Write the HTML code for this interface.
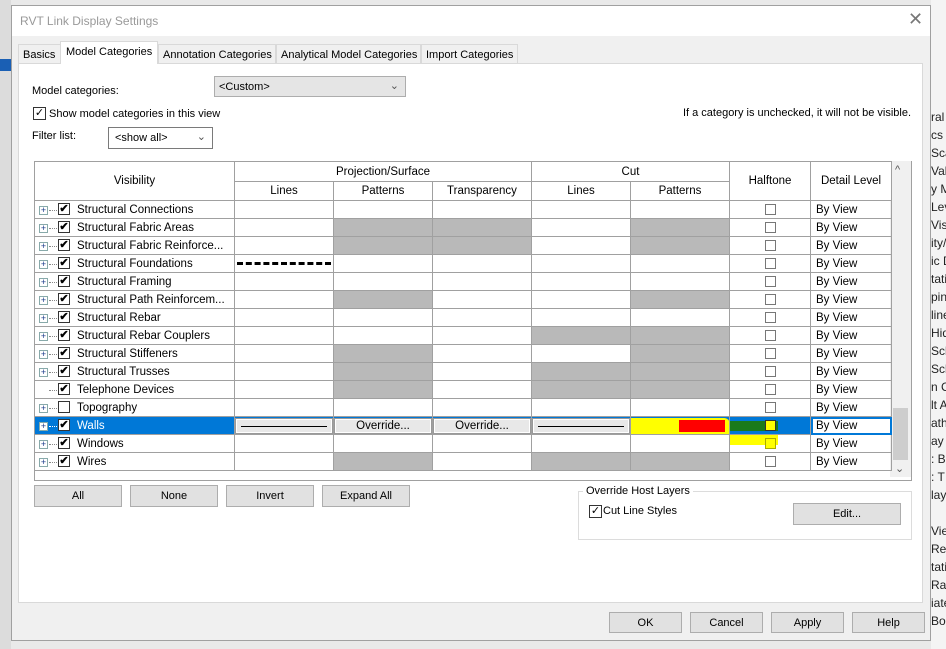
<!DOCTYPE html>
<html><head><meta charset="utf-8">
<style>
*{box-sizing:border-box;margin:0;padding:0}
body{width:946px;height:649px;overflow:hidden;background:#e9e9e9;font-family:"Liberation Sans",sans-serif;font-size:11px;color:#000;position:relative}
.a{position:absolute}
.dlg{left:11px;top:5px;width:920px;height:636px;background:#f0f0f0;border:1px solid #a0a0a0}
.title{left:0;top:0;width:918px;height:30px;background:#fff}
.tab{top:38px;height:20px;border:1px solid #d9d9d9;border-bottom:none;background:#f0f0f0;padding:4px 0 0 4px;white-space:nowrap;overflow:hidden}
.panel{left:6px;top:57px;width:905px;height:540px;background:#fff;border:1px solid #d9d9d9}
.btn{background:#e1e1e1;border:1px solid #adadad;text-align:center;line-height:20px}
.cb{width:13px;height:13px;border:1px solid #333;background:#fff}
table{border-collapse:collapse;table-layout:fixed}
td{border:1px solid #a0a0a0;height:18px;padding:0;white-space:nowrap;overflow:hidden;font-size:11.5px}
.h td{text-align:center;background:#fff}
.x{background:repeating-conic-gradient(#8c8c8c 0 25%,#e6e6e6 0 50%) 0 0/2px 2px}
.v{position:relative;padding-left:42px}
.pl{position:absolute;left:4px;top:5px;width:9px;height:9px;border:1px solid #8aa;background:#fff;font-size:9px;line-height:7px;text-align:center;color:#1a3a8a}
.dot{position:absolute;left:14px;top:9px;width:8px;border-top:1px dotted #888}
.c{position:absolute;left:23px;top:2px;width:12px;height:12px;border:1px solid #333;background:#fff;font-size:11px;line-height:10px;text-align:center;font-weight:bold}
.hc{text-align:center}
.hb{display:inline-block;width:11px;height:11px;border:1px solid #777;background:#fff;vertical-align:middle}
.dl{padding-left:5px}
.sel td{background:#0078d7;color:#fff}
.ob{background:#e8e8e8;border:1px solid #fff;outline:1px solid #999;height:14px;margin:1px;color:#000;text-align:center;line-height:13px}
</style></head><body>
<div class="a" style="left:0;top:0;width:11px;height:649px;background:#dcdcdc"></div>
<div class="a" style="left:0;top:59px;width:11px;height:12px;background:#1a5fb4"></div>
<div class="a" style="left:931px;top:0;width:15px;height:649px;background:#f4f4f4;overflow:hidden;font-size:12px;line-height:18px;color:#222;white-space:nowrap">
<div style="margin-top:108px">ral<br>cs<br>Sca<br>Val<br>y M<br>Lev<br>Visi<br>ity/<br>ic D<br>tati<br>pin<br>line<br>Hid<br>Sch<br>Sch<br>n C<br>lt A<br>ath<br>ay<br>: B<br>: T<br>lay<br><br>Vie<br>Reg<br>tati<br>Ran<br>iate<br>Bo</div></div>
<div class="a dlg">
 <div class="a title"><span class="a" style="left:8px;top:8px;color:#999;font-size:12px">RVT Link Display Settings</span>
 <span class="a" style="left:896px;top:3px;color:#777;font-size:18px">✕</span></div>
 <div class="a tab" style="left:6px;width:44px">Basics</div>
 <div class="a tab" style="left:146px;width:118px;">Annotation Categories</div>
 <div class="a tab" style="left:264px;width:145px">Analytical Model Categories</div>
 <div class="a tab" style="left:409px;width:97px">Import Categories</div>
 <div class="a panel">
  <span class="a" style="left:13px;top:21px">Model categories:</span>
  <div class="a" style="left:195px;top:12px;width:192px;height:21px;background:#e5e5e5;border:1px solid #adadad;padding:4px 0 0 4px">&lt;Custom&gt;<span class="a" style="right:6px;top:2px;color:#555">⌄</span></div>
  <div class="a cb" style="left:14px;top:43px;border-color:#333;font-size:11px;line-height:11px;text-align:center">✓</div>
  <span class="a" style="left:30px;top:44px">Show model categories in this view</span>
  <span class="a" style="left:13px;top:66px">Filter list:</span>
  <div class="a" style="left:89px;top:63px;width:105px;height:22px;background:#fff;border:1px solid #7a7a7a;padding:4px 0 0 6px">&lt;show all&gt;<span class="a" style="right:6px;top:2px;color:#555">⌄</span></div>
  <span class="a" style="right:11px;top:43px">If a category is unchecked, it will not be visible.</span>
  <div class="a" style="left:15px;top:97px;width:878px;height:320px;border:1px solid #a0a0a0;background:#fff"></div>
  <div class="a" style="left:871px;top:97px;width:21px;height:316px;background:#f0f0f0"></div>
  <span class="a" style="left:876px;top:100px;color:#555">^</span>
  <div class="a" style="left:874px;top:344px;width:15px;height:52px;background:#cdcdcd"></div>
  <span class="a" style="left:876px;top:398px;color:#555">⌄</span>
  <table class="a" style="left:15px;top:97px;width:857px">
   <colgroup><col style="width:200px"><col style="width:99px"><col style="width:99px"><col style="width:99px"><col style="width:99px"><col style="width:99px"><col style="width:81px"><col style="width:81px"></colgroup>
   <tr class="h"><td rowspan="2" style="height:39px">Visibility</td><td colspan="3" style="height:20px">Projection/Surface</td><td colspan="2">Cut</td><td rowspan="2">Halftone</td><td rowspan="2">Detail Level</td></tr>
   <tr class="h"><td style="height:19px">Lines</td><td>Patterns</td><td>Transparency</td><td>Lines</td><td>Patterns</td></tr>
   <tr><td class="v"><span class="pl">+</span><span class="dot"></span><span class="c">✔</span>Structural Connections</td><td></td><td></td><td></td><td></td><td></td><td class="hc"><span class="hb"></span></td><td class="dl">By View</td></tr>
   <tr><td class="v"><span class="pl">+</span><span class="dot"></span><span class="c">✔</span>Structural Fabric Areas</td><td></td><td class="x"></td><td class="x"></td><td></td><td class="x"></td><td class="hc"><span class="hb"></span></td><td class="dl">By View</td></tr>
   <tr><td class="v"><span class="pl">+</span><span class="dot"></span><span class="c">✔</span>Structural Fabric Reinforce...</td><td></td><td class="x"></td><td class="x"></td><td></td><td class="x"></td><td class="hc"><span class="hb"></span></td><td class="dl">By View</td></tr>
   <tr><td class="v"><span class="pl">+</span><span class="dot"></span><span class="c">✔</span>Structural Foundations</td><td><div style="margin:0 2px;border-top:3px dashed #000;height:0"></div></td><td></td><td></td><td></td><td></td><td class="hc"><span class="hb"></span></td><td class="dl">By View</td></tr>
   <tr><td class="v"><span class="pl">+</span><span class="dot"></span><span class="c">✔</span>Structural Framing</td><td></td><td></td><td></td><td></td><td></td><td class="hc"><span class="hb"></span></td><td class="dl">By View</td></tr>
   <tr><td class="v"><span class="pl">+</span><span class="dot"></span><span class="c">✔</span>Structural Path Reinforcem...</td><td></td><td class="x"></td><td></td><td></td><td class="x"></td><td class="hc"><span class="hb"></span></td><td class="dl">By View</td></tr>
   <tr><td class="v"><span class="pl">+</span><span class="dot"></span><span class="c">✔</span>Structural Rebar</td><td></td><td></td><td></td><td></td><td></td><td class="hc"><span class="hb"></span></td><td class="dl">By View</td></tr>
   <tr><td class="v"><span class="pl">+</span><span class="dot"></span><span class="c">✔</span>Structural Rebar Couplers</td><td></td><td></td><td></td><td class="x"></td><td class="x"></td><td class="hc"><span class="hb"></span></td><td class="dl">By View</td></tr>
   <tr><td class="v"><span class="pl">+</span><span class="dot"></span><span class="c">✔</span>Structural Stiffeners</td><td></td><td class="x"></td><td></td><td></td><td class="x"></td><td class="hc"><span class="hb"></span></td><td class="dl">By View</td></tr>
   <tr><td class="v"><span class="pl">+</span><span class="dot"></span><span class="c">✔</span>Structural Trusses</td><td></td><td class="x"></td><td></td><td class="x"></td><td class="x"></td><td class="hc"><span class="hb"></span></td><td class="dl">By View</td></tr>
   <tr><td class="v"><span class="dot"></span><span class="c">✔</span>Telephone Devices</td><td></td><td class="x"></td><td></td><td class="x"></td><td class="x"></td><td class="hc"><span class="hb"></span></td><td class="dl">By View</td></tr>
   <tr><td class="v"><span class="pl">+</span><span class="dot"></span><span class="c"></span>Topography</td><td></td><td></td><td></td><td></td><td></td><td class="hc"><span class="hb"></span></td><td class="dl">By View</td></tr>
   <tr class="sel"><td class="v"><span class="pl">+</span><span class="dot" style="border-color:#fff"></span><span class="c" style="color:#000">✔</span>Walls</td><td><div class="ob"><div style="margin:6px 4px 0;border-top:1px solid #000"></div></div></td><td><div class="ob">Override...</div></td><td><div class="ob">Override...</div></td><td><div class="ob"><div style="margin:6px 4px 0;border-top:1px solid #000"></div></div></td><td style="position:relative"><div class="a" style="left:0;top:1px;width:99px;height:16px;background:#ff0;border-radius:0 6px 2px 0"></div><div class="a" style="left:48px;top:3px;width:46px;height:12px;background:#f00"></div></td><td class="hc" style="position:relative;overflow:visible"><div class="a" style="left:0;top:4px;width:48px;height:10px;background:#1a7a1a"></div><span class="hb" style="position:relative;background:#ff0;border-color:#333"></span></td><td class="dl" style="background:#fff;color:#000;outline:2px solid #0078d7;outline-offset:-2px">By View</td></tr>
   <tr><td class="v"><span class="pl">+</span><span class="dot"></span><span class="c">✔</span>Windows</td><td></td><td></td><td></td><td></td><td></td><td class="hc" style="position:relative"><div class="a" style="left:0;top:0;width:48px;height:10px;background:#ff0"></div><span class="hb" style="position:relative;background:#ff0;border-color:#aa0"></span></td><td class="dl">By View</td></tr>
   <tr><td class="v"><span class="pl">+</span><span class="dot"></span><span class="c">✔</span>Wires</td><td></td><td class="x"></td><td></td><td class="x"></td><td class="x"></td><td class="hc"><span class="hb"></span></td><td class="dl">By View</td></tr>
  </table>
  <div class="a btn" style="left:15px;top:421px;width:88px;height:22px">All</div>
  <div class="a btn" style="left:111px;top:421px;width:88px;height:22px">None</div>
  <div class="a btn" style="left:207px;top:421px;width:88px;height:22px">Invert</div>
  <div class="a btn" style="left:303px;top:421px;width:88px;height:22px">Expand All</div>
  <div class="a" style="left:559px;top:427px;width:334px;height:49px;border:1px solid #dcdcdc"></div>
  <span class="a" style="left:564px;top:421px;background:#fff;padding:0 3px">Override Host Layers</span>
  <div class="a cb" style="left:570px;top:441px;font-size:11px;line-height:11px;text-align:center;border-color:#333">✓</div>
  <span class="a" style="left:584px;top:441px">Cut Line Styles</span>
  <div class="a btn" style="left:774px;top:439px;width:108px;height:22px">Edit...</div>
 </div>
 <div class="a btn" style="left:597px;top:606px;width:73px;height:21px">OK</div>
 <div class="a btn" style="left:678px;top:606px;width:73px;height:21px">Cancel</div>
 <div class="a btn" style="left:759px;top:606px;width:73px;height:21px">Apply</div>
 <div class="a btn" style="left:840px;top:606px;width:73px;height:21px">Help</div>
</div>
<div class="a tab" style="left:60px;top:41px;width:98px;height:23px;background:#fff;padding-top:4px;padding-left:5px">Model Categories</div>
</body></html>
